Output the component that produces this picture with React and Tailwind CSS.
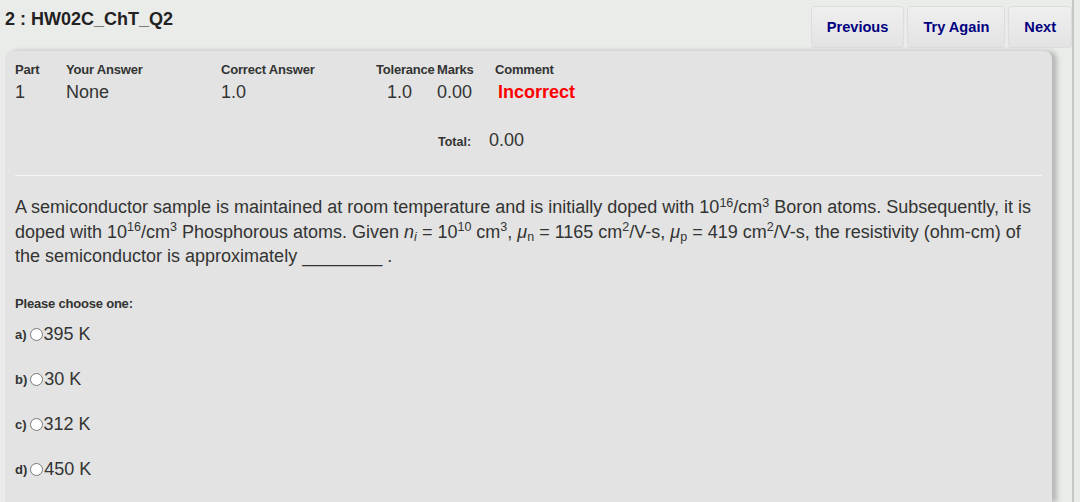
export default function App() {
  const options = [
    { key: "a)", label: "395 K" },
    { key: "b)", label: "30 K" },
    { key: "c)", label: "312 K" },
    { key: "d)", label: "450 K" },
  ];

  return (
    <div
      className="min-h-[502px] h-[502px] overflow-hidden bg-[#eaecea] text-[#333]"
      style={{ fontFamily: '"Liberation Sans", Arial, sans-serif' }}
    >
      <div className="w-[1074px] h-full border-r-2 border-[#c6c8c6] flex flex-col">
        {/* Header */}
        <div className="flex items-start justify-between pl-[5px] pt-[6px]">
          <h2 className="text-[18px] font-bold text-[#222] leading-none mt-[4px]">
            2 : HW02C_ChT_Q2
          </h2>
          <div className="flex gap-[3px]">
            {["Previous", "Try Again", "Next"].map((b) => (
              <button
                key={b}
                className="h-[42px] px-[15px] pt-[2px] rounded-[3px] border border-[#dcdedc] bg-gradient-to-b from-[#efefef] to-[#e3e3e3] text-[14.6px] font-bold text-[#000080]"
              >
                {b}
              </button>
            ))}
          </div>
        </div>

        {/* Card */}
        <div className="ml-[5px] mt-[3px] w-[1047px] flex-1 rounded-t-[8px] bg-[#e2e3e2] shadow-[5px_0_5px_rgba(0,0,0,0.22)] px-[10px]">
          {/* Results table */}
          <div className="pt-[11px]">
            <div className="flex text-[13px] font-bold text-[#333] leading-[16px] tracking-[-0.2px]">
              <div className="w-[51px]">Part</div>
              <div className="w-[155px]">Your Answer</div>
              <div className="w-[155px]">Correct Answer</div>
              <div className="w-[61px]">Tolerance</div>
              <div className="w-[58px]">Marks</div>
              <div>Comment</div>
            </div>
            <div className="flex text-[18px] leading-[22px] mt-[3px]">
              <div className="w-[51px]">1</div>
              <div className="w-[155px]">None</div>
              <div className="w-[155px]">1.0</div>
              <div className="w-[61px] pl-[11px]">1.0</div>
              <div className="w-[58px]">0.00</div>
              <div className="pl-[3px] text-[18px] font-bold text-[#ff0000]">
                Incorrect
              </div>
            </div>
            <div className="flex items-baseline mt-[24px] pl-[423px]">
              <span className="text-[12.5px] font-bold w-[51px]">Total:</span>
              <span className="text-[18px]">0.00</span>
            </div>
          </div>

          <div className="mt-[21px] h-px bg-[#f4f5f4]" />

          {/* Question */}
          <p className="mt-[19px] text-[18px] leading-[24.5px] text-[#333]">
            A semiconductor sample is maintained at room temperature and is
            initially doped with 10<sup className="text-[12.5px]">16</sup>/cm
            <sup className="text-[12.5px]">3</sup> Boron atoms. Subsequently,
            it is doped with 10<sup className="text-[12.5px]">16</sup>/cm
            <sup className="text-[12.5px]">3</sup> Phosphorous atoms. Given{" "}
            <i>n</i>
            <sub className="text-[12.5px] italic">i</sub> = 10
            <sup className="text-[12.5px]">10</sup> cm
            <sup className="text-[12.5px]">3</sup>, <i>μ</i>
            <sub className="text-[12.5px]">n</sub> = 1165 cm
            <sup className="text-[12.5px]">2</sup>/V-s, <i>μ</i>
            <sub className="text-[12.5px]">p</sub> = 419 cm
            <sup className="text-[12.5px]">2</sup>/V-s, the resistivity
            (ohm-cm) of the semiconductor is approximately ________ .
          </p>

          <div className="mt-[27px] text-[13px] font-bold leading-[16px] tracking-[-0.2px]">
            Please choose one:
          </div>

          <div className="mt-[12px] flex flex-col gap-[23px]">
            {options.map((o) => (
              <label key={o.key} className="flex items-center h-[22px]">
                <span className="text-[13px] font-bold">{o.key}</span>
                <input
                  type="radio"
                  name="ans"
                  className="m-0 ml-[3px] mr-[1px] w-[13px] h-[13px]"
                />
                <span className="text-[18px]">{o.label}</span>
              </label>
            ))}
          </div>
        </div>
      </div>
    </div>
  );
}
